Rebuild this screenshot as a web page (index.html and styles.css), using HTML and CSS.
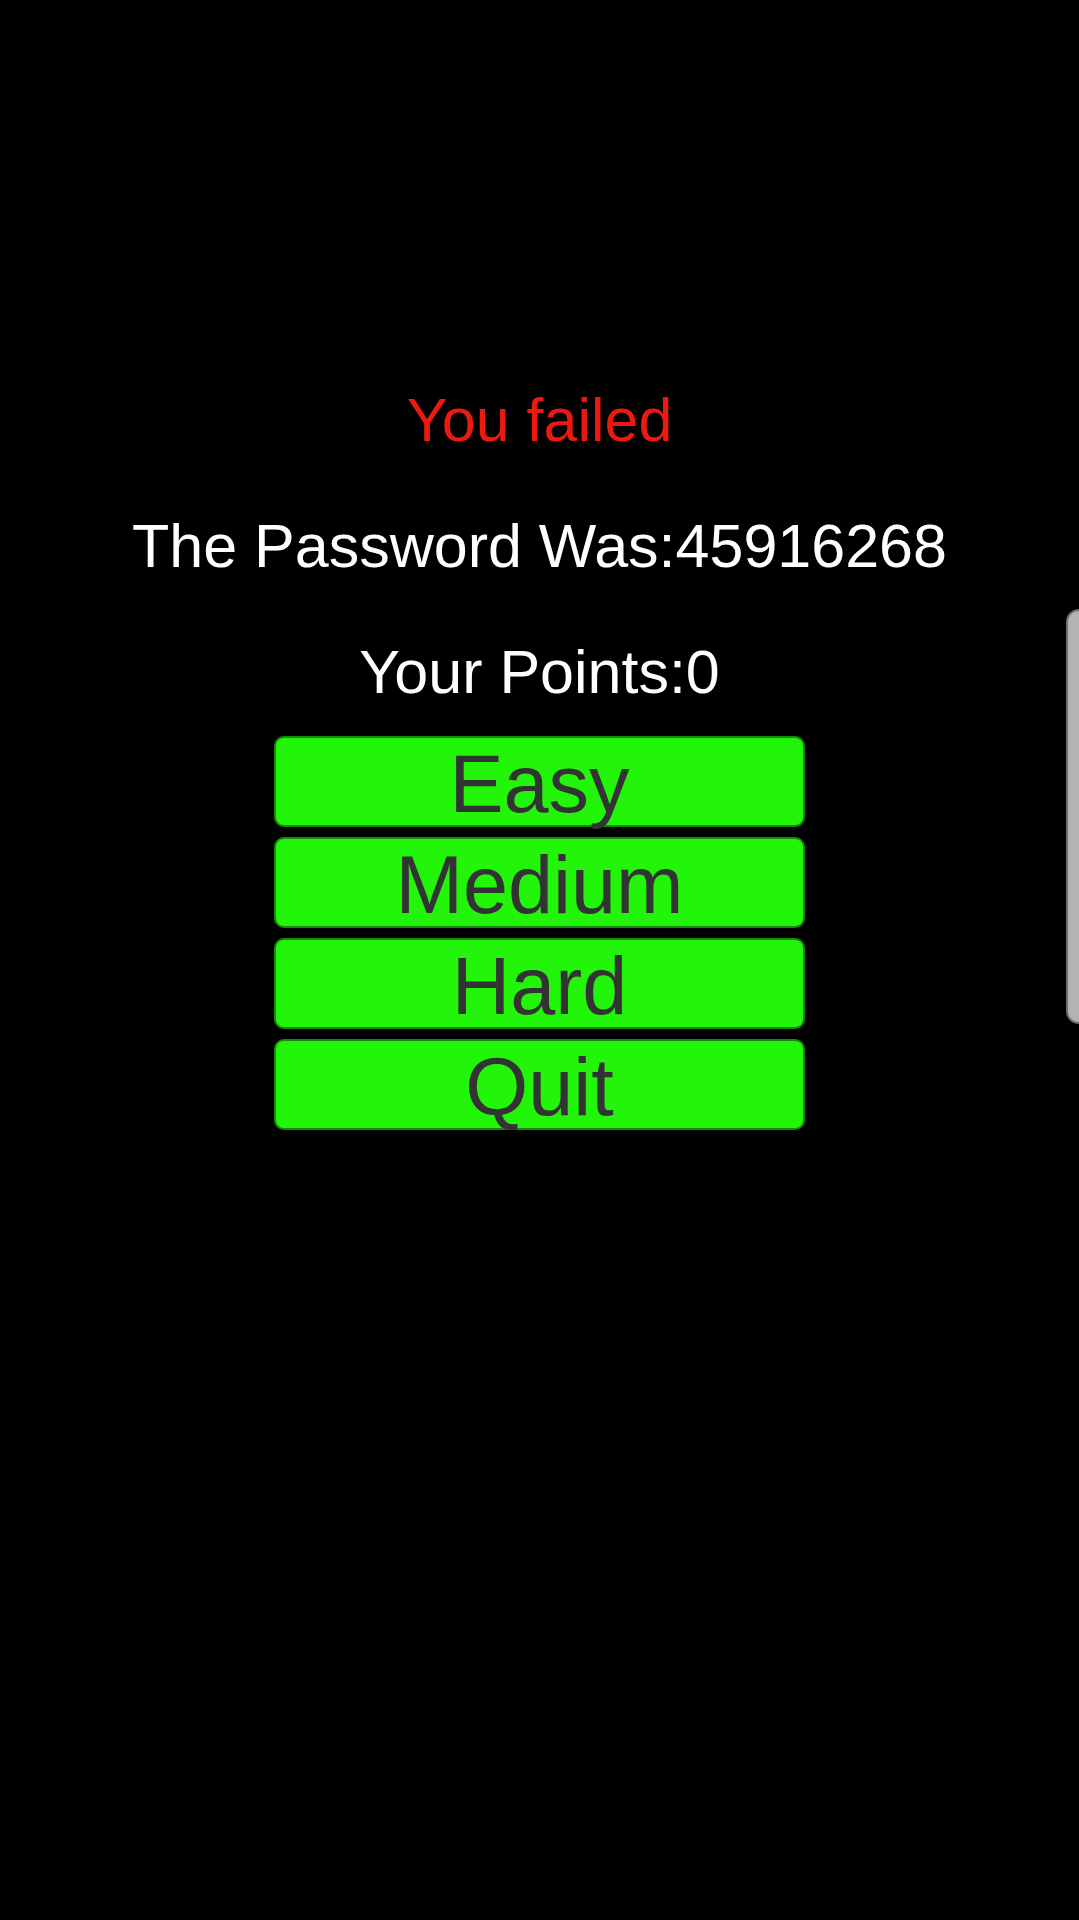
FILE: index.html
```html
<!DOCTYPE html>
<html lang="en">
<head>
<meta charset="utf-8">
<title>You failed</title>
<link rel="stylesheet" href="styles.css">
</head>
<body>
<main class="screen">
  <p class="line line-fail">You failed</p>
  <p class="line">The Password Was:45916268</p>
  <p class="line">Your Points:0</p>
  <div class="menu">
    <button class="btn">Easy</button>
    <button class="btn">Medium</button>
    <button class="btn">Hard</button>
    <button class="btn">Quit</button>
  </div>
</main>
<div class="edge-handle"></div>
</body>
</html>
```

FILE: styles.css
```css
html, body {
  margin: 0;
  padding: 0;
  background: #000;
  height: 100%;
}
body {
  font-family: "Liberation Sans", Arial, sans-serif;
  overflow: hidden;
}
.screen {
  display: flex;
  flex-direction: column;
  align-items: center;
  padding-top: 357px;
}
.line {
  margin: 0;
  font-size: 61px;
  line-height: 126px;
  color: #fff;
  white-space: nowrap;
}
.line-fail {
  color: #ec1a0e;
}
.menu {
  display: flex;
  flex-direction: column;
  gap: 10px;
  margin-top: 1px;
  width: 531px;
}
.btn {
  height: 91px;
  box-sizing: border-box;
  padding: 3px 0 0;
  border: 2px solid #168a0c;
  border-radius: 10px;
  background: #22f50a;
  color: #333;
  font-family: "Liberation Sans", Arial, sans-serif;
  font-size: 81px;
  line-height: 86px;
  text-align: center;
  overflow: visible;
}
.edge-handle {
  position: absolute;
  top: 609px;
  right: 0;
  width: 11px;
  height: 411px;
  background: #b3b3b3;
  border: 2px solid #6e6e6e;
  border-right: none;
  border-radius: 13px 0 0 13px;
}
```
